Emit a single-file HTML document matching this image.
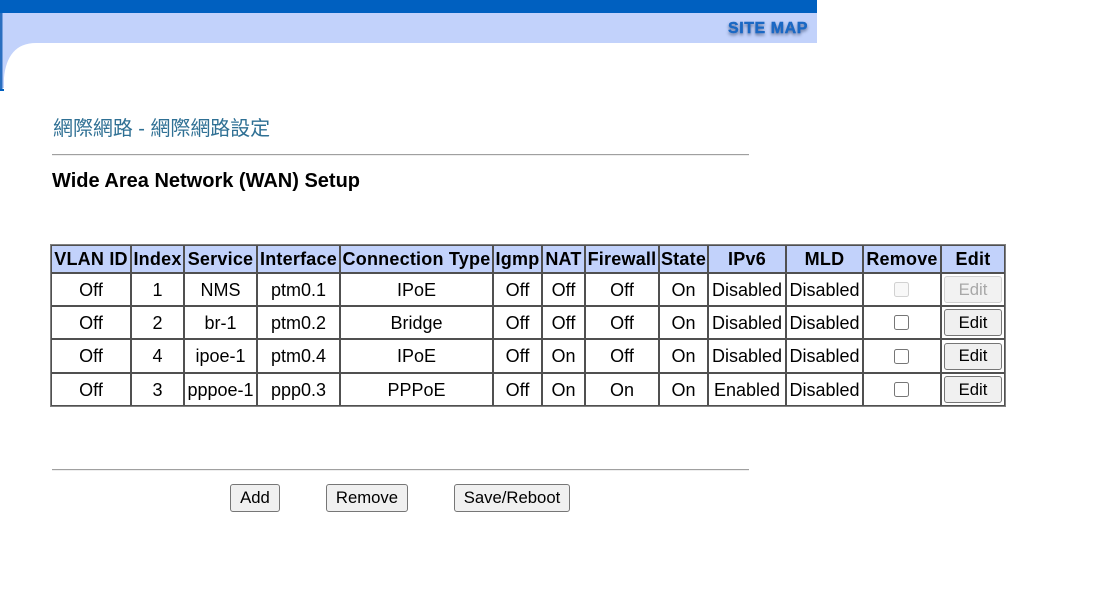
<!DOCTYPE html>
<html lang="zh-Hant">
<head>
<meta charset="utf-8">
<title>WAN Setup</title>
<style>
html,body{margin:0;padding:0;background:#fff;width:1096px;height:600px;overflow:hidden}
body{position:relative;font-family:"Liberation Sans",Arial,sans-serif;color:#000}
#head{position:absolute;left:0;top:0}
#site{position:absolute;left:728px;top:20px;font:bold 16px/18px "Liberation Sans",sans-serif;color:#1a68c4;-webkit-text-stroke:.4px #1a68c4;text-shadow:0 2px 3px rgba(20,40,80,.7);white-space:nowrap;letter-spacing:.55px}
#crumb{position:absolute;left:53px;top:116px;font-size:20px;line-height:26px;color:#2f7094;white-space:nowrap;font-family:"Liberation Sans","Noto Sans CJK TC",sans-serif;letter-spacing:-.05px}
.hr{position:absolute;left:52px;width:697px;height:1px;background:#a0a0a0;border-bottom:1px solid #eee}
#h{position:absolute;left:52px;top:169px;font:bold 20px/24px "Liberation Sans",sans-serif;white-space:nowrap}
table{position:absolute;left:50px;top:244px;width:955px;table-layout:fixed;border-collapse:separate;border-spacing:0;border:1px solid #808080;font-size:18px}
td,th{border:1px solid #505050;padding:0;text-align:center;overflow:hidden;white-space:nowrap;height:31px;line-height:20px;box-sizing:content-box}
th{background:#c2d2fb;font-weight:bold;height:26px;letter-spacing:.22px}
tr.t td{height:32px}
input[type=checkbox]{margin:0;width:15px;height:15px;vertical-align:middle;display:inline-block;position:relative;top:-1px;left:-1px}
button{font:16.7px "Liberation Sans",sans-serif;background:#f0f0f0;border:1px solid #767676;border-radius:3px;color:#000;padding:0;box-sizing:border-box}
td button{width:58px;height:27px;vertical-align:middle;display:inline-block}
button[disabled]{color:#a8a8a8;border-color:#d0d0d0;background:#f2f2f2}
.b{position:absolute;top:484px;height:28px}
</style>
</head>
<body>
<svg id="head" width="817" height="92" viewBox="0 0 817 92">
<rect x="0" y="0" width="817" height="13" fill="#0060c0"/>
<rect x="0" y="13" width="817" height="30" fill="#c2d2fb"/>
<path d="M0 43H36C16 43 6 56 4 78V88H0Z" fill="#c2d2fb"/>
<rect x="0" y="13" width="2.5" height="76" fill="#2a6fc0"/>
<rect x="0" y="89" width="4" height="2" fill="#0060c0"/>
</svg>
<div id="site">SITE MAP</div>
<div id="crumb">網際網路 - 網際網路設定</div>
<div class="hr" style="top:154px"></div>
<div id="h">Wide Area Network (WAN) Setup</div>
<table>
<colgroup>
<col style="width:80px"><col style="width:53px"><col style="width:73px"><col style="width:83px"><col style="width:153px"><col style="width:49px"><col style="width:43px"><col style="width:74px"><col style="width:49px"><col style="width:78px"><col style="width:77px"><col style="width:78px"><col style="width:64px">
</colgroup>
<tr><th>VLAN ID</th><th>Index</th><th>Service</th><th>Interface</th><th>Connection Type</th><th>Igmp</th><th>NAT</th><th>Firewall</th><th>State</th><th>IPv6</th><th>MLD</th><th>Remove</th><th>Edit</th></tr>
<tr><td>Off</td><td>1</td><td>NMS</td><td>ptm0.1</td><td>IPoE</td><td>Off</td><td>Off</td><td>Off</td><td>On</td><td>Disabled</td><td>Disabled</td><td><input type="checkbox" disabled></td><td><button disabled>Edit</button></td></tr>
<tr><td>Off</td><td>2</td><td>br-1</td><td>ptm0.2</td><td>Bridge</td><td>Off</td><td>Off</td><td>Off</td><td>On</td><td>Disabled</td><td>Disabled</td><td><input type="checkbox"></td><td><button>Edit</button></td></tr>
<tr class="t"><td>Off</td><td>4</td><td>ipoe-1</td><td>ptm0.4</td><td>IPoE</td><td>Off</td><td>On</td><td>Off</td><td>On</td><td>Disabled</td><td>Disabled</td><td><input type="checkbox"></td><td><button>Edit</button></td></tr>
<tr><td>Off</td><td>3</td><td>pppoe-1</td><td>ppp0.3</td><td>PPPoE</td><td>Off</td><td>On</td><td>On</td><td>On</td><td>Enabled</td><td>Disabled</td><td><input type="checkbox"></td><td><button>Edit</button></td></tr>
</table>
<div class="hr" style="top:469px"></div>
<button class="b" style="left:230px;width:50px">Add</button>
<button class="b" style="left:326px;width:82px">Remove</button>
<button class="b" style="left:454px;width:116px">Save/Reboot</button>
</body>
</html>
